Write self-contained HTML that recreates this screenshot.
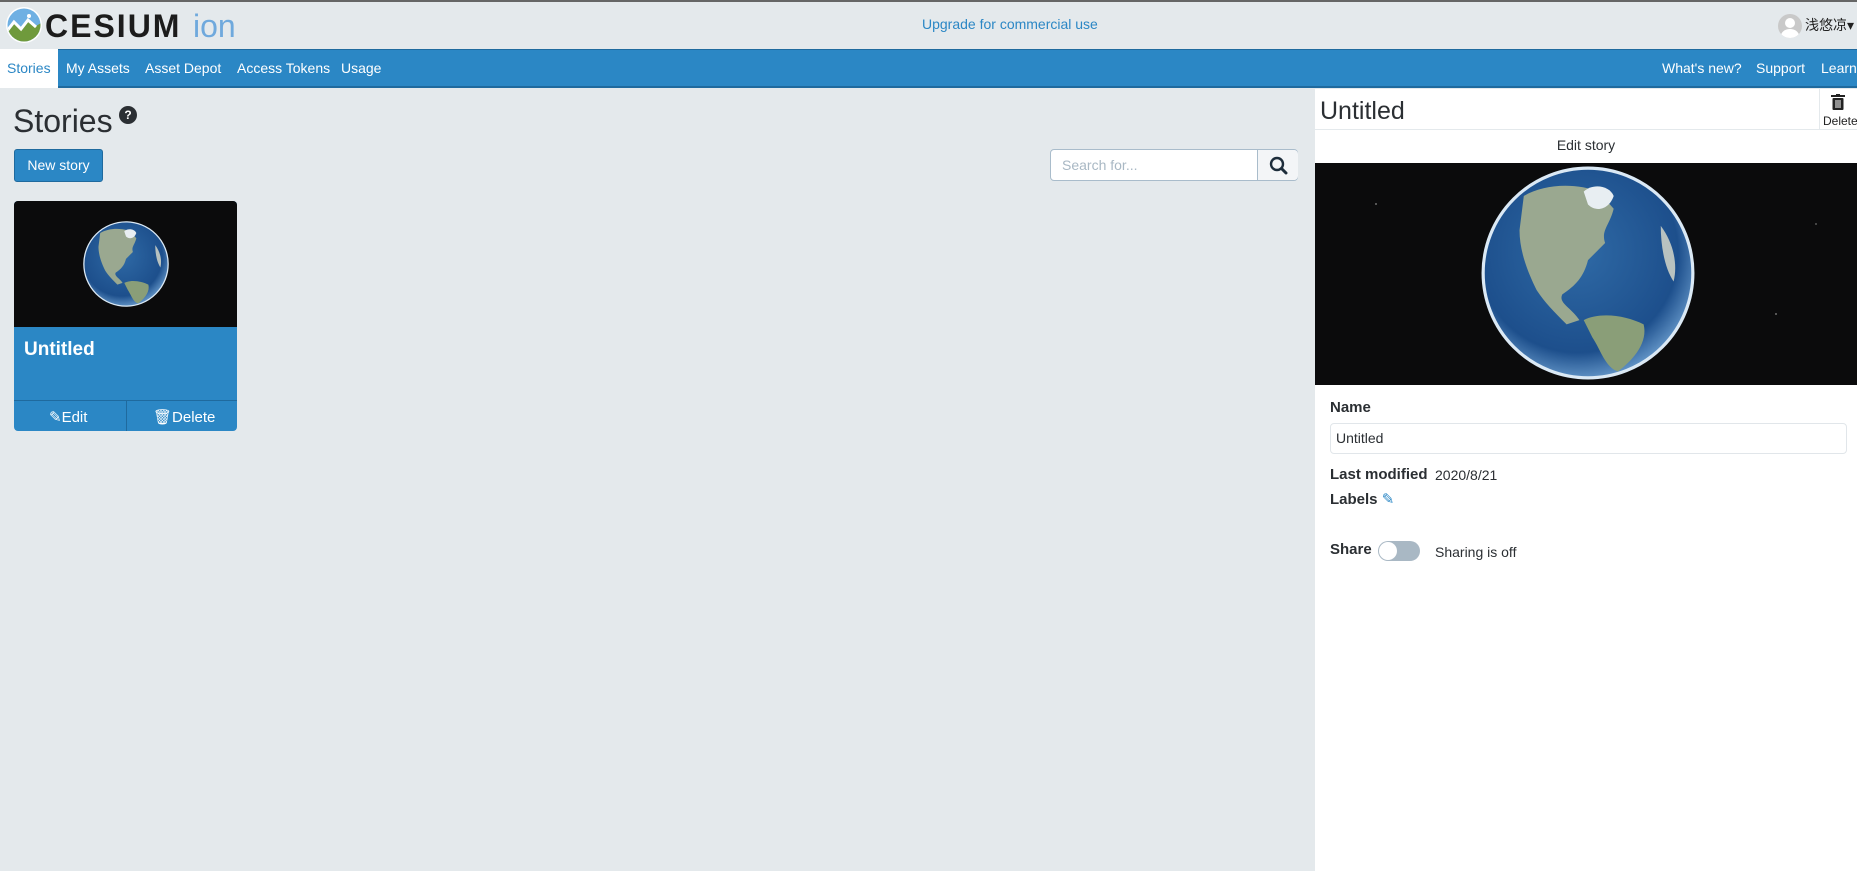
<!DOCTYPE html>
<html><head><meta charset="utf-8"><style>
*{box-sizing:border-box;margin:0;padding:0}
body{width:1857px;height:871px;overflow:hidden;background:#e4e9ec;font-family:"Liberation Sans","Noto Sans CJK SC",sans-serif;color:#2b2f33;position:relative}
.top{position:absolute;left:0;top:0;width:1857px;height:49px;background:#e4e9ec;border-top:2px solid #666}
.nav{position:absolute;left:0;top:49px;width:1857px;height:39px;background:#2b87c5;border-top:1px solid #1f6a9e;border-bottom:2px solid #1f6a9e}
.nav span{position:absolute;top:10px;color:#fff;font-size:14px}
.abs{position:absolute}
</style></head><body>
<svg width="0" height="0" style="position:absolute">
 <defs>
  <radialGradient id="oc" cx="45%" cy="40%" r="60%"><stop offset="0" stop-color="#2f6aa6"/><stop offset="0.8" stop-color="#1d4f8c"/><stop offset="1" stop-color="#5d8fc2"/></radialGradient>
  <symbol id="globe" viewBox="0 0 100 100">
   <circle cx="50" cy="50" r="49" fill="url(#oc)"/>
   <path d="M20 14 C30 8 45 8 55 12 L62 20 C60 28 56 30 58 36 L50 44 C48 52 44 56 38 60 C36 64 42 66 46 72 L40 74 C34 68 30 64 26 58 C22 50 18 40 18 30 Z" fill="#9aa890"/>
   <path d="M48 12 C52 8 60 9 62 14 C60 20 54 22 50 18 Z" fill="#e8eef2"/>
   <path d="M48 72 C56 68 68 70 76 74 C78 82 72 90 64 96 C58 94 56 86 52 80 Z" fill="#8a9e78"/>
   <path d="M84 28 C90 36 92 46 90 54 C86 48 84 38 84 28 Z" fill="#b8c2c0"/>
   <circle cx="50" cy="50" r="49" fill="none" stroke="#dbe9f5" stroke-width="1.5"/>
  </symbol>
 </defs>
</svg>
<div class="top">
 <svg class="abs" style="left:5px;top:4px" width="38" height="38" viewBox="0 0 38 38">
  <circle cx="19" cy="19" r="18" fill="#fff"/>
  <clipPath id="c"><circle cx="19" cy="19" r="16.5"/></clipPath>
  <g clip-path="url(#c)"><rect width="38" height="38" fill="#6fb0e3"/>
  <path d="M0 26 L9 15 L16 22 L23 13 L31 20 L38 16 L38 38 L0 38Z" fill="#6f9a3c"/>
  <path d="M2 25 L9 16 L16 23 L23 14 L31 21" stroke="#fff" stroke-width="3" fill="none"/>
  <circle cx="24" cy="10" r="2" fill="#fff"/></g>
 </svg>
 <div class="abs" style="left:45px;top:5px;font-size:32px;font-weight:bold;color:#1c1c1c;letter-spacing:2px;line-height:38px">CESIUM</div>
 <div class="abs" style="left:193px;top:5px;font-size:32px;color:#6fa9dd;line-height:38px">ion</div>
 <div class="abs" style="left:922px;top:14px;font-size:14px;color:#2b87c5">Upgrade for commercial use</div>
 <div class="abs" style="left:1778px;top:12px;width:24px;height:24px;border-radius:50%;background:#c9c9c9;overflow:hidden"><div style="position:absolute;left:7px;top:4px;width:10px;height:10px;border-radius:50%;background:#fff"></div><div style="position:absolute;left:3px;top:15px;width:18px;height:14px;border-radius:50%;background:#fff"></div></div>
 <div class="abs" style="left:1805px;top:13px;font-size:14px;color:#222">浅悠凉▾</div>
</div>
<div class="nav">
 <div class="abs" style="left:0;top:-1px;width:58px;height:39px;background:#fff"></div>
 <span style="left:7px;color:#2b87c5">Stories</span>
 <span style="left:66px">My Assets</span>
 <span style="left:145px">Asset Depot</span>
 <span style="left:237px">Access Tokens</span>
 <span style="left:341px">Usage</span>
 <span style="left:1662px">What's new?</span>
 <span style="left:1756px">Support</span>
 <span style="left:1821px">Learn</span>
</div>
<div class="abs" style="left:13px;top:103px;font-size:32px;color:#2b2f33">Stories</div>
<div class="abs" style="left:119px;top:106px;width:18px;height:18px;border-radius:50%;background:#2b2f33;color:#fff;font-size:12px;font-weight:bold;text-align:center;line-height:18px">?</div>
<div class="abs" style="left:14px;top:149px;width:89px;height:33px;background:#2b87c5;border:1px solid #1f6a9e;border-radius:3px;color:#fff;font-size:14px;text-align:center;line-height:31px">New story</div>
<div class="abs" style="left:1050px;top:149px;width:248px;height:32px;background:#fff;border:1px solid #a9bccb;border-radius:4px">
 <div class="abs" style="left:11px;top:7px;font-size:14px;color:#a9b8c4">Search for...</div>
 <div class="abs" style="left:206px;top:0;width:41px;height:30px;background:#f3f5f7;border-left:1px solid #a9bccb;border-radius:0 4px 4px 0">
  <svg class="abs" style="left:11px;top:6px" width="19" height="19" viewBox="0 0 19 19"><circle cx="8" cy="8" r="6" stroke="#1d2d3b" stroke-width="2.4" fill="none"/><path d="M12.5 12.5 L17 17" stroke="#1d2d3b" stroke-width="3" stroke-linecap="round"/></svg>
 </div>
</div>
<div class="abs" style="left:14px;top:201px;width:223px;height:230px;background:#2b87c5;border-radius:4px;overflow:hidden">
 <div class="abs" style="left:0;top:0;width:223px;height:126px;background:#0b0b0c"></div>
 <svg class="abs" style="left:69px;top:20px" width="86" height="86"><use href="#globe"/></svg>
 <div class="abs" style="left:10px;top:138px;font-size:19px;font-weight:bold;color:#fff">Untitled</div>
 <div class="abs" style="left:0;top:199px;width:223px;height:1px;background:#1f6a9e"></div>
 <div class="abs" style="left:112px;top:199px;width:1px;height:31px;background:#1f6a9e"></div>
 <div class="abs" style="left:35px;top:207px;font-size:15px;color:#fff">✎Edit</div>
 <div class="abs" style="left:139px;top:207px;font-size:15px;color:#fff">🗑︎Delete</div>
</div>
<div class="abs" style="left:1315px;top:89px;width:542px;height:782px;background:#fff">
 <div class="abs" style="left:5px;top:8px;font-size:25px;color:#2b2f33">Untitled</div>
 <div class="abs" style="left:0;top:40px;width:542px;height:1px;background:#e4e9ec"></div>
 <div class="abs" style="left:504px;top:0;width:1px;height:40px;background:#e4e9ec"></div>
 <svg class="abs" style="left:516px;top:5px" width="14" height="16" viewBox="0 0 14 16"><rect x="0" y="1" width="14" height="2" fill="#222"/><rect x="5" y="0" width="4" height="2" fill="#222"/><rect x="1.5" y="4" width="11" height="12" rx="1" fill="#222"/><path d="M5 6v8M7 6v8M9 6v8" stroke="#fff"/></svg>
 <div class="abs" style="left:508px;top:25px;font-size:12px;color:#222">Delete</div>
 <div class="abs" style="left:0;top:48px;width:542px;text-align:center;font-size:14px;color:#2b2f33">Edit story</div>
 <div class="abs" style="left:0;top:74px;width:542px;height:222px;background:#0b0b0c">
  <div style="position:absolute;left:60px;top:40px;width:2px;height:2px;background:#555"></div>
  <div style="position:absolute;left:460px;top:150px;width:2px;height:2px;background:#555"></div>
  <div style="position:absolute;left:500px;top:60px;width:2px;height:2px;background:#444"></div>
 </div>
 <svg class="abs" style="left:166px;top:77px" width="214" height="214"><use href="#globe"/></svg>
 <div class="abs" style="left:15px;top:310px;font-size:15px;font-weight:bold;color:#2b2f33">Name</div>
 <div class="abs" style="left:15px;top:334px;width:517px;height:31px;border:1px solid #e1e6ea;border-radius:4px;font-size:14px;padding:6px 5px;color:#2b2f33">Untitled</div>
 <div class="abs" style="left:15px;top:377px;font-size:15px;font-weight:bold;color:#2b2f33">Last modified</div>
 <div class="abs" style="left:120px;top:378px;font-size:14px;color:#2b2f33">2020/8/21</div>
 <div class="abs" style="left:15px;top:401px;font-size:15px;font-weight:bold;color:#2b2f33">Labels <span style="color:#2b87c5;font-weight:normal">✎</span></div>
 <div class="abs" style="left:15px;top:452px;font-size:15px;font-weight:bold;color:#2b2f33">Share</div>
 <div class="abs" style="left:63px;top:452px;width:42px;height:20px;border-radius:10px;background:#a9b8c4"><div style="position:absolute;left:1px;top:1px;width:18px;height:18px;border-radius:50%;background:#fff"></div></div>
 <div class="abs" style="left:120px;top:455px;font-size:14px;color:#2b2f33">Sharing is off</div>
</div>
</body></html>
